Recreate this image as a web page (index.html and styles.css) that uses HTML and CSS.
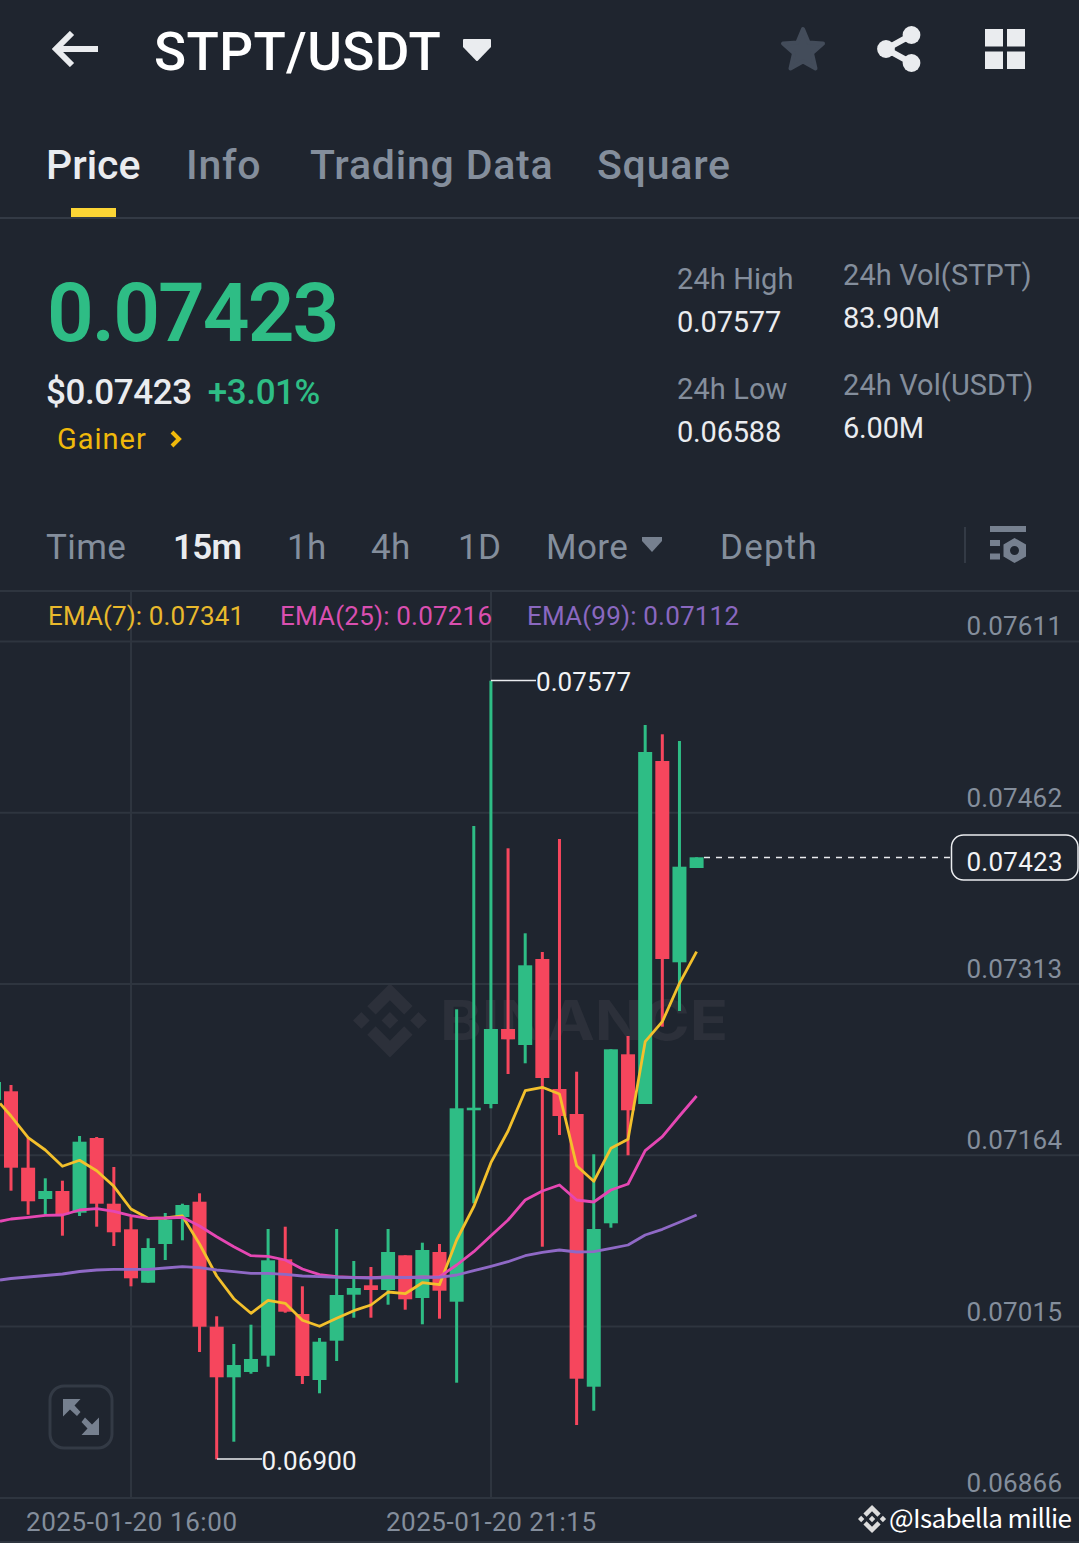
FILE: index.html
```html
<!DOCTYPE html>
<html lang="en">
<head>
    <meta charset="UTF-8">
    <meta name="viewport" content="width=device-width, initial-scale=1.0">
    <title>STPT/USDT</title>
    <link rel="stylesheet" href="styles.css">
</head>
<body>
    <header class="header">
        <svg class="back" width="46" height="36" viewBox="0 0 46 36">
            <path d="M20 2 L4 18 L20 34 M4 18 H46" fill="none" stroke="#eaecef" stroke-width="6"/>
        </svg>
        <h1 class="pair">STPT/USDT</h1>
        <svg class="pair-caret" width="28" height="22" viewBox="0 0 28 22">
            <path d="M1 0H27Q28 0 28 1V8L15 21.5Q14 22.5 13 21.5L0 8V1Q0 0 1 0Z" fill="#eaecef"/>
        </svg>
        <div class="actions">
            <svg width="46" height="46" viewBox="0 0 46 46">
                <path d="M23 3L28.6 16.5L43 17.6L32 27.2L35.5 42.5L23 35.5L10.5 42.5L14 27.2L3 17.6L17.4 16.5Z" fill="#434c5a" stroke="#434c5a" stroke-width="4" stroke-linejoin="round"/>
            </svg>
            <svg width="44" height="46" viewBox="0 0 44 46">
                <path d="M34.500 9L9 23L34.500 37" fill="none" stroke="#eaecef" stroke-width="6"/>
                <circle cx="34.500" cy="9" r="8.900" fill="#eaecef"/>
                <circle cx="9" cy="23" r="8.900" fill="#eaecef"/>
                <circle cx="34.500" cy="37" r="8.900" fill="#eaecef"/>
            </svg>
            <svg width="40" height="40" viewBox="0 0 40 40">
                <path d="M0 0H18V17.500H0Z M22 0H40V17.500H22Z M0 22.500H18V40H0Z M22 22.500H40V40H22Z" fill="#eaecef"/>
            </svg>
        </div>
    </header>

    <nav class="tabs">
        <a class="tab active">Price</a>
        <a class="tab">Info</a>
        <a class="tab">Trading Data</a>
        <a class="tab">Square</a>
    </nav>

    <section class="summary">
        <div class="quote">
            <div class="last">0.07423</div>
            <div class="fiat"><span>$0.07423</span><span class="change">+3.01%</span></div>
            <div class="tag">Gainer
                <svg width="12" height="18" viewBox="0 0 12 18">
                    <path d="M2 2L9 9L2 16" fill="none" stroke="#f0b90b" stroke-width="4"/>
                </svg>
            </div>
        </div>
        <div class="stats">
            <dl class="stat-col">
                <dt>24h High</dt><dd>0.07577</dd>
                <dt>24h Low</dt><dd>0.06588</dd>
            </dl>
            <dl class="stat-col vol">
                <dt>24h Vol(STPT)</dt><dd>83.90M</dd>
                <dt>24h Vol(USDT)</dt><dd>6.00M</dd>
            </dl>
        </div>
    </section>

    <div class="intervals">
        <span>Time</span>
        <span class="active">15m</span>
        <span>1h</span>
        <span>4h</span>
        <span>1D</span>
        <span class="more">More
            <svg width="20" height="15" viewBox="0 0 20 15"><path d="M0 0H20V4L10 15L0 4Z" fill="#76808f"/></svg>
        </span>
        <span class="depth">Depth</span>
        <span class="settings">
            <svg width="36" height="37" viewBox="0 0 36 37">
                <path d="M0 0H36V6H0Z M0 14H10V20H0Z M0 27.500H10V33.500H0Z" fill="#76808f"/>
                <path fill-rule="evenodd" d="M24.500 12L36 18.500V30.500L24.500 37L13.500 30.500V18.500Z M24.500 20A4.500 4.500 0 1 0 24.500 29A4.500 4.500 0 1 0 24.500 20Z" fill="#76808f"/>
            </svg>
        </span>
    </div>

    <section class="chart">
        <svg class="plot" width="1079" height="954" viewBox="0 589 1079 954">
            <defs>
                <path id="logo" d="M16.624 13.920l2.718 2.715-7.353 7.353-7.353-7.352 2.718-2.716 4.635 4.659 4.636-4.659zm4.637-4.637L24 12l-2.715 2.716L18.568 12l2.692-2.716zm-9.272.001l2.716 2.691-2.716 2.717L9.272 12l2.716-2.715zm-9.272-.001L5.409 12l-2.691 2.692L0 12l2.716-2.716zM11.989.012l7.353 7.329-2.717 2.715-4.636-4.635-4.635 4.659-2.717-2.715z"/>
            </defs>
            <g class="watermark">
                <use href="#logo" transform="translate(353 983.500) scale(3.080)"/>
                <text x="440" y="1040" textLength="288" lengthAdjust="spacingAndGlyphs">BINANCE</text>
            </g>
            <g id="grid" class="grid"></g>
            <g id="candles"></g>
            <g id="lines" class="lines"></g>
            <g class="legend">
                <text class="ema7" x="48" y="625" textLength="196">EMA(7): 0.07341</text>
                <text class="ema25" x="280" y="625" textLength="212">EMA(25): 0.07216</text>
                <text class="ema99" x="527" y="625" textLength="212">EMA(99): 0.07112</text>
            </g>
            <g id="axis" class="axis">
                <text x="26" y="1531" textLength="211">2025-01-20 16:00</text>
                <text x="386" y="1531" textLength="210">2025-01-20 21:15</text>
            </g>
            <g class="marks">
                <path d="M491 680.500H536 M217 1459H262"/>
                <path d="M704 857.500H951" stroke-dasharray="6 6"/>
                <rect x="951.500" y="835" width="126.500" height="45" rx="12"/>
                <text x="536" y="691" textLength="95">0.07577</text>
                <text x="261.500" y="1470" textLength="95">0.06900</text>
                <text x="966.500" y="871" textLength="96">0.07423</text>
            </g>
            <g class="expand">
                <rect x="50" y="1386" width="62" height="62" rx="14"/>
                <path d="M63 1399H80.500L74.500 1405.500L80.500 1412L77 1416L70 1409.500L63 1416.500Z M99 1435H81.500L87.500 1428.500L81.500 1422L85 1417.500L92 1424.500L99 1417.500Z"/>
            </g>
            <g class="author">
                <use href="#logo" transform="translate(858 1505) scale(1.170)"/>
                <text x="889" y="1528" textLength="183">@Isabella millie</text>
            </g>
        </svg>
    </section>

    <script src="app.js"></script>
</body>
</html>
```
FILE: styles.css
```css
* {
    box-sizing: border-box;
}

body {
    margin: 0;
    width: 1079px;
    height: 1543px;
    overflow: hidden;
    background: #1f252f;
    color: #eaecef;
    font-family: Roboto, "Liberation Sans", sans-serif;
}

svg {
    display: block;
}

/* header */
.header {
    display: flex;
    align-items: center;
    height: 98px;
    padding: 0 54px 0 52px;
}

.pair {
    margin: 5px 0 0 56px;
    color: #fff;
    font-size: 53px;
    font-weight: 500;
    letter-spacing: 0.4px;
    line-height: 60px;
}

.pair-caret {
    margin: 2px 0 0 22px;
}

.actions {
    display: flex;
    align-items: center;
    gap: 51px;
    margin-left: auto;
}

.actions svg:last-child {
    margin-left: 13px;
}

/* tabs */
.tabs {
    display: grid;
    grid-template-columns: 140px 124px 287px auto;
    justify-items: start;
    height: 121px;
    padding: 43px 47px 0 46px;
    border-bottom: 2px solid #333a45;
}

.tab {
    color: #848e9c;
    font-size: 41px;
    font-weight: 500;
    letter-spacing: 0.8px;
    line-height: 48px;
}

.tab.active {
    color: #eaecef;
    letter-spacing: 0;
}

.tab.active::after {
    content: "";
    display: block;
    width: 45px;
    height: 9px;
    margin: 19px auto 0;
    background: #fcd535;
}

/* price and 24h stats */
.summary {
    display: flex;
    justify-content: space-between;
    height: 286px;
    padding: 43px 0 0 47px;
}

.quote {
    padding-top: 9px;
}

.last {
    color: #2ebd85;
    font-size: 82px;
    font-weight: 600;
    line-height: 84px;
    letter-spacing: -2px;
}

.fiat {
    display: flex;
    gap: 16px;
    margin: 18px 0 0 -1px;
    font-size: 35px;
    font-weight: 500;
    line-height: 40px;
    letter-spacing: -0.4px;
}

.change {
    color: #2ebd85;
}

.tag {
    display: flex;
    align-items: center;
    gap: 23px;
    margin: 9px 0 0 10px;
    color: #f0b90b;
    font-size: 29px;
    line-height: 34px;
    letter-spacing: 1px;
}

.stats {
    display: flex;
    width: 402px;
}

.stat-col {
    width: 166px;
    margin: 0;
    font-size: 29px;
    line-height: 34px;
    letter-spacing: -0.2px;
    white-space: nowrap;
}

.stat-col.vol {
    margin-top: -4px;
}

.stat-col dt {
    color: #848e9c;
    letter-spacing: 0.1px;
}

.stat-col dd {
    margin: 9px 0 33px;
}

/* interval switch */
.intervals {
    display: grid;
    grid-template-columns: 127px 114px 84px 87px 88px 174px auto 62px;
    align-items: center;
    height: 84px;
    padding: 0 53px 0 46px;
    color: #848e9c;
    font-size: 35px;
    letter-spacing: 0.4px;
}

.intervals .depth {
    letter-spacing: 1.2px;
}

.intervals .active {
    color: #eaecef;
    font-weight: 600;
    letter-spacing: -0.8px;
}

.more {
    display: flex;
    align-items: center;
    gap: 14px;
}

.more svg {
    margin-top: -6px;
}

.settings {
    display: flex;
    align-items: center;
    justify-content: flex-end;
    height: 36px;
    margin-top: -5px;
    border-left: 2px solid #333a45;
}

/* chart */
.chart text {
    font-size: 26px;
}

.chart .watermark {
    fill: #2c303a;
}

.chart .watermark text {
    font-family: Inter, sans-serif;
    font-size: 55px;
    font-weight: 700;
}

.grid {
    stroke: #2e353f;
    stroke-width: 2;
}

.up {
    fill: #2ebd85;
}

.down {
    fill: #f6465d;
}

.lines {
    fill: none;
    stroke-width: 2.8;
    stroke-linejoin: round;
}

.legend .ema7 { fill: #e9b92c; }
.legend .ema25 { fill: #d94fb0; }
.legend .ema99 { fill: #8a68c0; }

.lines .ema7 { stroke: #f3c02c; }
.lines .ema25 { stroke: #e547b3; }
.lines .ema99 { stroke: #8f69c6; }

.axis {
    fill: #848e9c;
}

.marks text {
    fill: #f2f3f5;
}

.marks path,
.marks rect {
    fill: none;
    stroke: #eaecef;
    stroke-width: 1.5;
}

.expand rect {
    fill: none;
    stroke: #333a45;
    stroke-width: 3;
}

.expand path {
    fill: #76808f;
}

.author use {
    fill: #dcdcdc;
}

.author text {
    fill: #fff;
    font-family: "Noto Sans CJK SC", sans-serif;
    font-size: 26px;
    font-weight: 400;
}
```
FILE: app.js
```js
const step = 17.14;
const firstX = 11;

// [up, high, body top, body bottom, low] in chart pixels
const candles = [
    [0, 1085, 1091.3, 1167.7, 1190.7],
    [0, 1138, 1167.7, 1201.3, 1214.7],
    [1, 1178.3, 1191, 1199, 1216],
    [0, 1180.7, 1191, 1214.3, 1235.7],
    [1, 1136, 1141.7, 1212.7, 1216],
    [0, 1137, 1138, 1203.7, 1226.7],
    [0, 1167, 1203.7, 1232.3, 1246],
    [0, 1217, 1229.3, 1278.3, 1286.3],
    [1, 1238.3, 1248, 1282.7, 1282.7],
    [1, 1213, 1219.7, 1244, 1260],
    [1, 1203.7, 1205, 1217, 1240.3],
    [0, 1193.3, 1201.7, 1326.7, 1352],
    [0, 1316.3, 1326.7, 1377.3, 1459.3],
    [1, 1344, 1365, 1377.3, 1441.7],
    [1, 1324.7, 1359, 1372, 1373.7],
    [1, 1229, 1260.3, 1355.7, 1366.7],
    [0, 1226.7, 1259.3, 1311.7, 1312.7],
    [0, 1286.3, 1314, 1376, 1384],
    [1, 1338, 1341.7, 1380, 1393.3],
    [1, 1229, 1295, 1340.7, 1361],
    [1, 1261, 1288, 1294.7, 1317.7],
    [0, 1267, 1285.3, 1290, 1317.7],
    [1, 1229, 1252, 1290, 1304.7],
    [0, 1255.3, 1255.3, 1299.3, 1309.7],
    [1, 1242.7, 1250, 1298, 1324.3],
    [0, 1244, 1252, 1290.7, 1318.7],
    [1, 1009.3, 1108.3, 1301.7, 1382.7],
    [1, 826, 1107.7, 1110.3, 1203.3],
    [1, 680.7, 1029, 1104, 1108.3],
    [0, 848.3, 1029, 1039.3, 1074],
    [1, 933.3, 965.3, 1045, 1063.3],
    [0, 952, 959, 1078, 1246.7],
    [0, 839, 1089, 1116, 1135],
    [0, 1071.7, 1114, 1378.7, 1425],
    [1, 1154.3, 1229, 1386.7, 1410.7],
    [1, 1049.3, 1049.3, 1223.3, 1227.7],
    [0, 1036, 1054.3, 1110.3, 1155.3],
    [1, 725, 752, 1104, 1104],
    [0, 734.3, 761, 959, 1026.7],
    [1, 741, 866.7, 962.3, 1011],
    [1, 857.3, 857.3, 868, 868]
];

// first value is the left edge of the chart, then one per candle
const ema = {
    ema7: [1103.5, 1116, 1137.7, 1150, 1166.3, 1160.3, 1170.7, 1186.3, 1209, 1218.3, 1218, 1216, 1244, 1276, 1298.7, 1313.3, 1300.3, 1303.3, 1320.3, 1326.3, 1318.3, 1310.7, 1305, 1292, 1293.7, 1282.7, 1284.7, 1240, 1206.7, 1162.7, 1131, 1090.7, 1087.3, 1094, 1165.7, 1181.3, 1148.3, 1139.3, 1041.7, 1021.7, 983.3, 951.7],
    ema25: [1221.3, 1219, 1217.3, 1215.3, 1215, 1210, 1208.7, 1211.3, 1215.7, 1218.3, 1218, 1217.3, 1226, 1236.7, 1246.7, 1255.7, 1256.3, 1260, 1269, 1274.7, 1276.7, 1277.3, 1277.7, 1277, 1277.3, 1277, 1276.7, 1265, 1251.7, 1235.7, 1220, 1200, 1191, 1185, 1200, 1202, 1190, 1184, 1150.7, 1136.7, 1116, 1096],
    ema99: [1280, 1278.5, 1277, 1275.5, 1274, 1271.5, 1270, 1269.3, 1269.3, 1269.3, 1268, 1266.7, 1267.7, 1270, 1271.7, 1273.3, 1273.3, 1274.3, 1276, 1276.7, 1277.3, 1277.7, 1278, 1277.5, 1277.5, 1277.5, 1277.3, 1275, 1270.7, 1266.3, 1261.7, 1255.7, 1252.3, 1250, 1252, 1251.7, 1248.3, 1245, 1235, 1229.3, 1222.3, 1215]
};

const prices = ["0.07611", "0.07462", "0.07313", "0.07164", "0.07015", "0.06866"];

function buildGrid() {
    let lines = '<path d="M0 591H1079 M0 1542H1079 M131 591V1498 M491 591V1498"/>';
    let labels = "";
    prices.forEach((price, i) => {
        const y = 641.4 + i * 171.3;
        lines += `<path d="M0 ${y}H1079"/>`;
        labels += `<text x="966.5" y="${y - 6}" textLength="95.5">${price}</text>`;
    });
    document.getElementById("grid").innerHTML = lines;
    document.getElementById("axis").innerHTML += labels;
}

function buildCandles() {
    let out = '<rect class="up" x="-13" y="1082" width="14" height="18"/>';
    candles.forEach(([up, high, top, bottom, low], i) => {
        const x = firstX + i * step;
        out += `<g class="${up ? "up" : "down"}">
            <rect x="${x - 1.5}" y="${high}" width="3" height="${low - high}"/>
            <rect x="${x - 7}" y="${top}" width="14" height="${bottom - top}"/>
        </g>`;
    });
    document.getElementById("candles").innerHTML = out;
}

function buildLines() {
    let out = "";
    ["ema7", "ema25", "ema99"].forEach(name => {
        const points = ema[name].map((y, i) => (i == 0 ? 0 : firstX + (i - 1) * step) + "," + y);
        out += `<polyline class="${name}" points="${points.join(" ")}"/>`;
    });
    document.getElementById("lines").innerHTML = out;
}

buildGrid();
buildCandles();
buildLines();
```
